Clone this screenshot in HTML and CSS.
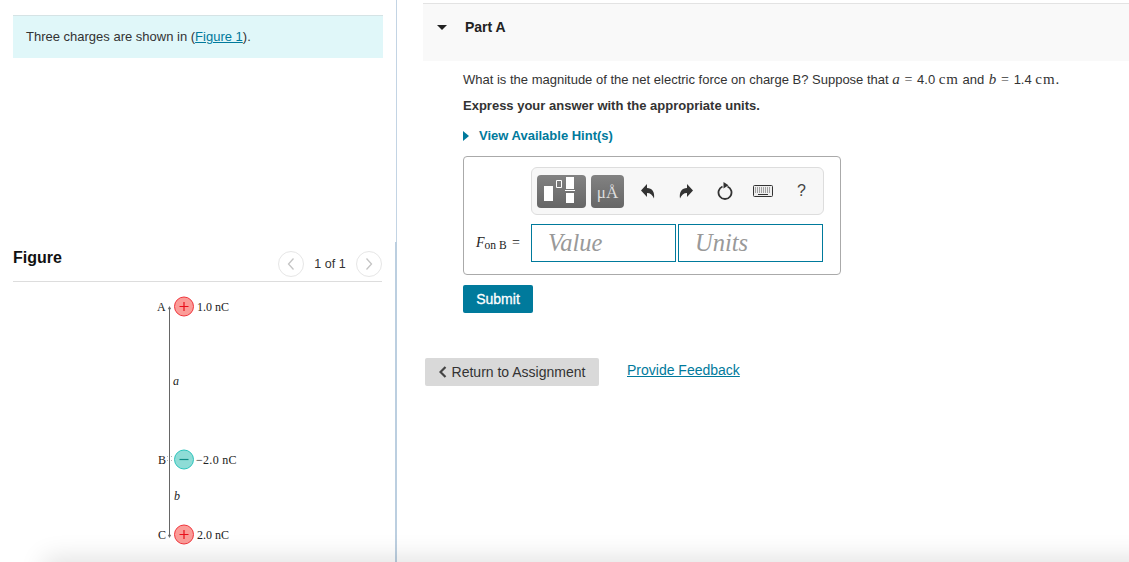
FILE: index.html
```html
<!DOCTYPE html>
<html lang="en">
<head>
<meta charset="utf-8">
<title>Part A</title>
<link rel="stylesheet" href="styles.css">
</head>
<body>
<div class="page">
  <aside class="left">
    <div class="intro">Three charges are shown in (<a href="#">Figure 1</a>).</div>
    <div class="fig-head">
      <h2>Figure</h2>
      <div class="pager">
        <span class="pg-btn"><svg width="10" height="14" viewBox="0 0 10 14"><path d="M7.500 1.500 2.500 7l5 5.500" fill="none" stroke="#c4c4c4" stroke-width="1.300"/></svg></span>
        <span class="pg-text">1 of 1</span>
        <span class="pg-btn"><svg width="10" height="14" viewBox="0 0 10 14"><path d="M2.500 1.500 7.500 7l-5 5.500" fill="none" stroke="#c4c4c4" stroke-width="1.300"/></svg></span>
      </div>
    </div>
    <svg class="diagram" width="370" height="270" viewBox="13 292 370 270">
      <path class="axis" d="M169.500 308V535"/>
      <path class="tick" d="M169.500 306.500l-1.300 2.500h2.600zM169.500 537.500l-1.300-2.500h2.600zM167 456.500h1M167 460.500h1M171 456.500h1M171 460.500h1"/>
      <circle class="pos" cx="184" cy="306.500" r="9.500"/>
      <path class="pos-sign" d="M179.500 306.500h9M184 302v9"/>
      <circle class="neg" cx="184" cy="459.500" r="9.500"/>
      <path class="neg-sign" d="M179.500 459.500h9"/>
      <circle class="pos" cx="184" cy="534.500" r="9.500"/>
      <path class="pos-sign" d="M179.500 534.500h9M184 530v9"/>
      <text x="157" y="311">A</text>
      <text x="197" y="311">1.0 nC</text>
      <text class="it" x="173" y="385">a</text>
      <text x="158" y="464">B</text>
      <text class="wide-text" x="196" y="464">−2.0 nC</text>
      <text class="it" x="174" y="500">b</text>
      <text x="158" y="539">C</text>
      <text x="197" y="539">2.0 nC</text>
    </svg>
  </aside>
  <main class="right">
    <header class="part-head">
      <svg class="caret" width="10" height="5" viewBox="0 0 10 5"><path d="M0 0h10L5 5z"/></svg>
      <h1>Part A</h1>
    </header>
    <div class="part-body">
      <p class="question">What is the magnitude of the net electric force on charge B? Suppose that <span class="math"><i>a</i> = </span>4.0 <span class="math unit-cm">cm</span> and <span class="math var-b"><i>b</i> = </span>1.4 <span class="math unit-cm">cm.</span></p>
      <p class="express">Express your answer with the appropriate units.</p>
      <p class="hint"><svg width="6" height="10" viewBox="0 0 6 10"><path d="M0 0l6 5-6 5z"/></svg><a href="#">View Available Hint(s)</a></p>
      <div class="answer">
        <div class="toolbar">
          <span class="tool wide"><svg width="49" height="33" viewBox="0 0 49 33"><path fill="#fff" d="M7 11h9v15H7zM29 2h8v12h-8zM29 18h8v10h-8zM28 15h10v1H28z"/><path fill="none" stroke="#fff" d="M19.500 5.500h5v7h-5z"/></svg></span>
          <span class="tool unit">μÅ</span>
          <span class="icon"><svg width="14" height="15" viewBox="0 0 14 15"><path fill="#333" d="M0 6.500 6 0v4C11 4 14 8 13 14.500 11.500 11 9.500 9 6 9v4z"/></svg></span>
          <span class="icon"><svg width="14" height="15" viewBox="0 0 14 15"><path fill="#333" d="M14 6.500 8 0v4C3 4 0 8 1 14.500 2.500 11 4.500 9 8 9v4z"/></svg></span>
          <span class="icon"><svg width="16" height="18" viewBox="0 0 16 18"><path fill="none" stroke="#333" stroke-width="1.800" d="M5.500 4.500a6.500 6.500 0 1 0 5 0"/><path fill="#333" d="M6.500 0v6.500l5-3.200z"/></svg></span>
          <span class="icon"><svg width="20" height="12" viewBox="0 0 20 12"><rect x=".5" y=".5" width="19" height="11" rx="1" fill="#eee" stroke="#333"/><path stroke="#555" stroke-dasharray="1 1" d="M2 3h16M2 5h16M2 7h16"/><path stroke="#333" d="M5 9.500h10"/></svg></span>
          <span class="icon help">?</span>
        </div>
        <div class="inputs">
          <span class="var"><i>F</i><sub>on B</sub> <span class="eq">=</span></span>
          <span class="field">Value</span>
          <span class="field">Units</span>
        </div>
      </div>
      <button class="submit" type="button">Submit</button>
    </div>
    <div class="actions">
      <button class="back" type="button"><svg width="8" height="12" viewBox="0 0 8 12"><path d="M6.500 1 1.500 6l5 5" fill="none" stroke="#444" stroke-width="2.200"/></svg>Return to Assignment</button>
      <a class="feedback" href="#">Provide Feedback</a>
    </div>
  </main>
</div>
<div class="bottom-shade"></div>
</body>
</html>
```
FILE: styles.css
```css
* { box-sizing: border-box; }
html, body { margin: 0; height: 100%; overflow: hidden; background: #fff; }
body { font-family: "Liberation Sans", Arial, sans-serif; font-size: 13px; color: #333; }
a { color: #007a9c; }
p, h1, h2 { margin: 0; }

.page { display: flex; height: 562px; }

.left { position: relative; width: 397px; flex: none; padding: 15px 13px 0; border-right: 1px solid #c3d4e4; }
.left::after { content: ""; position: absolute; top: 242px; bottom: 0; right: -1px; width: 2px; background: #bccfe0; }
.intro { width: 370px; height: 43px; padding: 13px 13px 0; background: #e0f7f9; border-top: 1px solid #d5e3e5; line-height: 15px; }
.fig-head { width: 369px; height: 224px; padding-top: 191px; display: flex; align-items: flex-start; justify-content: space-between; border-bottom: 1px solid #ddd; }
.fig-head h2 { font-size: 16px; line-height: 18px; color: #111; font-weight: 700; }
.pager { display: flex; align-items: center; margin-top: 2px; }
.pg-btn { width: 26px; height: 26px; border: 1px solid #e6e6e6; border-radius: 50%; display: flex; align-items: center; justify-content: center; }
.pg-text { width: 52px; text-align: center; font-size: 12.500px; color: #333; }

.diagram { display: block; margin-top: 10px; }
.diagram text { font-family: "Liberation Serif", serif; font-size: 12px; fill: #222; }
.diagram .it { font-style: italic; }
.diagram .wide-text { letter-spacing: .3px; }
.axis { stroke: #666; stroke-width: 1; fill: none; }
.tick { fill: #666; stroke: #666; stroke-width: .5; }
.pos { fill: #fb9c98; stroke: #f0353c; stroke-width: 1; }
.pos-sign { stroke: #e8101c; stroke-width: 1.200; fill: none; }
.neg { fill: #8edcd6; stroke: #2dc4bc; stroke-width: 1; }
.neg-sign { stroke: #0f8c86; stroke-width: 1.200; fill: none; }

.right { flex: 1; min-width: 0; padding: 3px 0 0 26px; }
.part-head { height: 58px; background: #f9f9f9; border-top: 1px solid #e3e3e3; display: flex; align-items: flex-start; padding: 15px 0 0 14px; }
.part-head h1 { font-size: 14px; line-height: 16px; font-weight: 700; color: #222; margin-left: 18px; }
.caret { margin-top: 6px; fill: #222; }
.part-body { padding: 10px 0 0 40px; }
.question { line-height: 18px; white-space: nowrap; }
.math { font-family: "Liberation Serif", serif; font-size: 14px; letter-spacing: .6px; line-height: 0; }
.math i { font-size: 15px; line-height: 0; }
.unit-cm { font-size: 15px; letter-spacing: .9px; }
.var-b { margin-left: 1px; }
.express { font-weight: 700; line-height: 16px; margin-top: 9px; }
.hint { display: flex; align-items: center; gap: 10px; line-height: 16px; margin-top: 14px; font-weight: 700; }
.hint svg { fill: #007a9c; }
.hint a { text-decoration: none; }

.answer { width: 378px; height: 119px; margin-top: 12px; border: 1px solid #aaa; border-radius: 4px; padding: 10px 0 0 67px; }
.toolbar { width: 293px; height: 48px; background: #f7f7f7; border: 1px solid #ddd; border-radius: 6px; display: flex; align-items: center; padding-left: 5px; }
.tool { flex: none; height: 33px; border-radius: 4px; background: linear-gradient(#828282, #666); display: flex; align-items: center; justify-content: center; }
.tool.wide { width: 49px; }
.tool.unit { width: 33px; margin-left: 5px; margin-right: 5px; padding-top: 3px; color: #ddd; font-family: "Liberation Serif", serif; font-size: 17px; }
.icon { flex: none; width: 38.300px; display: flex; justify-content: center; align-items: center; }
.help { font-size: 16px; color: #444; }
.inputs { display: flex; align-items: center; margin-top: 9px; margin-left: -67px; padding-left: 12px; }
.var { width: 55px; font-family: "Liberation Serif", serif; font-size: 14px; color: #222; white-space: nowrap; }
.var sub { font-size: 11.500px; line-height: 0; vertical-align: -2px; }
.eq { font-size: 14px; margin-left: 2px; }
.field { width: 145px; height: 38px; border: 1px solid #007a9c; margin-right: 2px; padding-left: 16px; font-family: "Liberation Serif", serif; font-style: italic; font-size: 24.500px; line-height: 36px; color: #999; }

.submit { display: block; width: 70px; height: 28px; margin-top: 10px; border: 0; border-radius: 2px; background: #007a9c; color: #fff; font: 400 14px/28px "Liberation Sans", Arial, sans-serif; -webkit-text-stroke: .3px #fff; padding: 0; }

.actions { display: flex; align-items: flex-start; margin-top: 45px; margin-left: 2px; }
.back { width: 174px; height: 28px; border: 0; border-radius: 2px; background: #d9d9d9; color: #333; font: 14px/28px "Liberation Sans", Arial, sans-serif; display: flex; align-items: center; justify-content: center; gap: 5px; padding: 0; }
.feedback { font-size: 14px; line-height: 16px; margin-left: 28px; margin-top: 4px; }

.bottom-shade { position: absolute; left: 50px; right: -50px; top: 564px; height: 20px; box-shadow: 0 0 26px 6px rgba(0,0,0,.12); pointer-events: none; }
```
